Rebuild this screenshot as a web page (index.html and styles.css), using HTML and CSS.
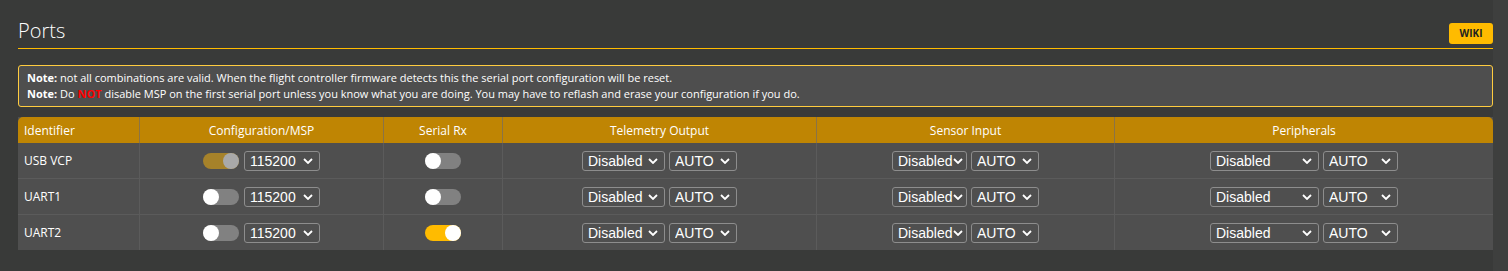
FILE: index.html
```html
<!DOCTYPE html>
<html lang="en">
<head>
    <meta charset="UTF-8">
    <meta name="viewport" content="width=device-width, initial-scale=1.0">
    <title>Ports</title>
    <link rel="stylesheet" href="styles.css">
</head>
<body>
    <div class="page">
        <div class="content">
            <div class="title-bar">
                <h1>Ports</h1>
                <a class="wiki" href="#">WIKI</a>
            </div>

            <div class="note">
                <p><b>Note:</b> not all combinations are valid. When the flight controller firmware detects this the serial port configuration will be reset.</p>
                <p><b>Note:</b> Do <span class="warn">NOT</span> disable MSP on the first serial port unless you know what you are doing. You may have to reflash and erase your configuration if you do.</p>
            </div>

            <table class="ports">
                <tr>
                    <th class="ident">Identifier</th>
                    <th class="c-msp">Configuration/MSP</th>
                    <th class="c-rx">Serial Rx</th>
                    <th class="c-tel">Telemetry Output</th>
                    <th class="c-sen">Sensor Input</th>
                    <th>Peripherals</th>
                </tr>
                <tr>
                    <td class="ident">USB VCP</td>
                    <td><div class="cell"><span class="switch on locked"></span><select class="sel-baud"><option>115200</option></select></div></td>
                    <td><div class="cell"><span class="switch"></span></div></td>
                    <td><div class="cell"><select class="sel-tel"><option>Disabled</option></select><select class="sel-auto"><option>AUTO</option></select></div></td>
                    <td><div class="cell"><select class="sel-sen"><option>Disabled</option></select><select class="sel-auto"><option>AUTO</option></select></div></td>
                    <td><div class="cell"><select class="sel-per"><option>Disabled</option></select><select class="sel-auto wide"><option>AUTO</option></select></div></td>
                </tr>
                <tr>
                    <td class="ident">UART1</td>
                    <td><div class="cell"><span class="switch"></span><select class="sel-baud"><option>115200</option></select></div></td>
                    <td><div class="cell"><span class="switch"></span></div></td>
                    <td><div class="cell"><select class="sel-tel"><option>Disabled</option></select><select class="sel-auto"><option>AUTO</option></select></div></td>
                    <td><div class="cell"><select class="sel-sen"><option>Disabled</option></select><select class="sel-auto"><option>AUTO</option></select></div></td>
                    <td><div class="cell"><select class="sel-per"><option>Disabled</option></select><select class="sel-auto wide"><option>AUTO</option></select></div></td>
                </tr>
                <tr>
                    <td class="ident">UART2</td>
                    <td><div class="cell"><span class="switch"></span><select class="sel-baud"><option>115200</option></select></div></td>
                    <td><div class="cell"><span class="switch on"></span></div></td>
                    <td><div class="cell"><select class="sel-tel"><option>Disabled</option></select><select class="sel-auto"><option>AUTO</option></select></div></td>
                    <td><div class="cell"><select class="sel-sen"><option>Disabled</option></select><select class="sel-auto"><option>AUTO</option></select></div></td>
                    <td><div class="cell"><select class="sel-per"><option>Disabled</option></select><select class="sel-auto wide"><option>AUTO</option></select></div></td>
                </tr>
            </table>
        </div>
        <div class="scroll-strip"></div>
    </div>
</body>
</html>
```

FILE: styles.css
```css
html, body {
    margin: 0;
    height: 100%;
}
body {
    background: #393a39;
    font-family: 'Open Sans', 'Noto Sans', sans-serif;
    color: #fff;
}
.page {
    display: flex;
    min-height: 100%;
}
.content {
    flex: 1;
    padding-left: 18px;
}
.scroll-strip {
    width: 15px;
    background: #3e3f3e;
}
.title-bar {
    display: flex;
    justify-content: space-between;
    align-items: center;
    height: 30px;
    margin-top: 18px;
    border-bottom: 1px solid #ffbb00;
}
h1 {
    margin: 0;
    padding-bottom: 4px;
    font-size: 20px;
    font-weight: 300;
    color: #fff;
    line-height: 24px;
}
.wiki {
    background: #ffbb00;
    color: #222;
    font-size: 10px;
    font-weight: 700;
    text-decoration: none;
    border-radius: 3px;
    width: 44px;
    height: 21px;
    line-height: 21px;
    text-align: center;
    margin-top: 1px;
}
.note {
    margin-top: 16px;
    border: 1px solid #ffcc3f;
    border-radius: 3px;
    background: #4e4e4e;
    padding: 4px 8px;
    font-size: 11px;
    line-height: 16px;
    color: #fff;
}
.note p {
    margin: 0;
}
.warn {
    color: #ff0000;
    font-weight: 700;
}
.ports {
    margin-top: 10px;
    width: 100%;
    border-collapse: collapse;
    background: #4f4f4f;
    font-size: 12px;
}
.ports th {
    background: #bf8503;
    color: #fff;
    font-weight: 400;
    height: 26px;
    padding: 0 6px;
    text-align: center;
    border-left: 1px solid #8a7346;
}
.ports th:first-child {
    border-left: none;
    border-top-left-radius: 5px;
}
.ports th:last-child {
    border-top-right-radius: 5px;
}
.ports th.ident {
    text-align: left;
    width: 109px;
}
.ports .c-msp { width: 231px; }
.ports .c-rx { width: 106px; }
.ports .c-tel { width: 301px; }
.ports .c-sen { width: 285px; }
.ports td {
    height: 35px;
    padding: 0 6px;
    border-top: 1px solid #5b5b5b;
    border-left: 1px solid #5b5b5b;
    font-size: 12px;
}
.ports td.ident {
    border-left: none;
}
.ports tr:nth-child(2) td {
    border-top: none;
}
.cell {
    display: flex;
    justify-content: center;
    align-items: center;
    gap: 4px;
}
.switch {
    position: relative;
    display: inline-block;
    width: 36px;
    height: 16px;
    border-radius: 8px;
    background: #818181;
    margin-right: 1px;
}
.switch::after {
    content: '';
    position: absolute;
    left: 0;
    top: 0;
    width: 16px;
    height: 16px;
    border-radius: 50%;
    background: #fff;
}
.switch.on {
    background: #ffbb00;
}
.switch.on::after {
    left: 20px;
}
.switch.locked {
    background: #a6822a;
}
.switch.locked::after {
    background: #a9a9a9;
}
select {
    -webkit-appearance: none;
    appearance: none;
    height: 20px;
    padding: 0 18px 0 5px;
    border: 1px solid #8d8d8d;
    border-radius: 3px;
    font-family: 'Liberation Sans', Arial, sans-serif;
    font-size: 14px;
    color: #fff;
    background: #4f4f4f url("data:image/svg+xml;utf8,<svg xmlns='http://www.w3.org/2000/svg' width='10' height='6' viewBox='0 0 10 6'><path d='M1 1l4 4 4-4' fill='none' stroke='white' stroke-width='1.8'/></svg>") no-repeat right 6px center;
}
.sel-baud { width: 76px; }
.sel-tel { width: 83px; }
.sel-sen { width: 75px; padding-right: 12px; background-position: right 3px center; }
.sel-per { width: 109px; }
.sel-auto { width: 68px; }
.sel-auto.wide { width: 75px; }
```
